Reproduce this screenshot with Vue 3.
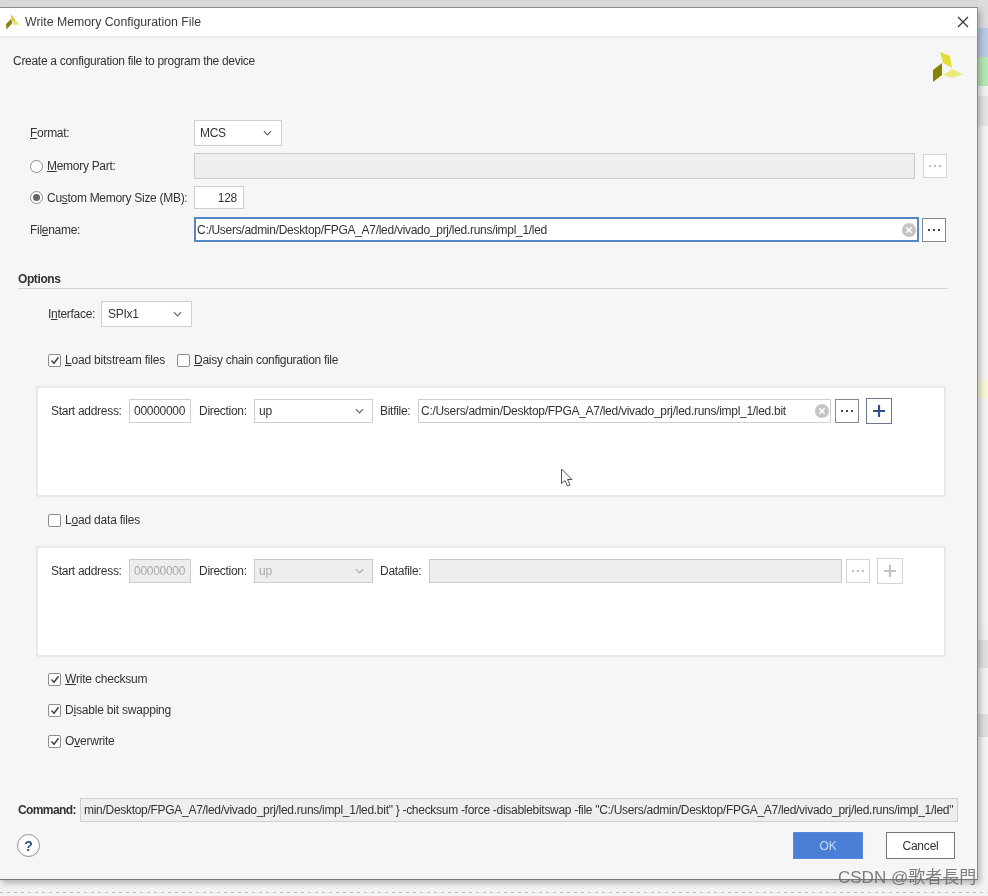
<template>
  <div class="page">
    <div class="backdrop">
      <div v-for="b in backdropBands" :key="b.top" class="band" :style="{ top: b.top + 'px', height: b.height + 'px', background: b.color }"></div>
      <div class="dashes"></div>
    </div>

    <div class="dialog">
      <div class="titlebar">
        <svg class="title-logo" width="15" height="16" viewBox="0 0 15 16">
          <path d="M5.500 0L9 4l2 4-4-1z" fill="#d4c52c" />
          <path d="M8 8l3-1 3.500 3.500L9 11z" fill="#e8e070" />
          <path d="M6 5l1.500 4-6 6.500L1 10z" fill="#8a8512" />
        </svg>
        <span class="title-text">Write Memory Configuration File</span>
        <svg class="close" width="12" height="12" viewBox="0 0 12 12">
          <path d="M1 1l10 10M11 1L1 11" stroke="#333" stroke-width="1.200" fill="none" />
        </svg>
      </div>

      <div class="intro">
        <span>Create a configuration file to program the device</span>
        <svg class="logo" width="32" height="34" viewBox="0 0 32 34">
          <path d="M8 2l10 4 2 12-9-5z" fill="#e2dd35" />
          <path d="M11 25l9-6 11 5-10 4z" fill="#ece97e" />
          <path d="M10 13v12l-9 7V20z" fill="#878200" />
        </svg>
      </div>

      <div class="form">
        <div class="row row-format">
          <label class="field-label"><u>F</u>ormat:</label>
          <div class="combo combo-format">
            <span>MCS</span>
            <svg class="chev" width="9" height="6" viewBox="0 0 10 6"><path d="M1 1l4 4 4-4" /></svg>
          </div>
        </div>

        <div class="row row-part">
          <label class="field-label radio-label"><i class="radio"></i><span><u>M</u>emory Part:</span></label>
          <div class="input disabled part-input"></div>
          <button class="dots dots-off part-btn"><i></i><i></i><i></i></button>
        </div>

        <div class="row row-size">
          <label class="field-label radio-label"><i class="radio on"></i><span>Cu<u>s</u>tom Memory Size (MB):</span></label>
          <div class="input size-input">128</div>
        </div>

        <div class="row row-file">
          <label class="field-label">Fil<u>e</u>name:</label>
          <div class="input focus file-input">
            <span class="grow">C:/Users/admin/Desktop/FPGA_A7/led/vivado_prj/led.runs/impl_1/led</span>
            <svg class="clear" width="14" height="14" viewBox="0 0 14 14">
              <circle cx="7" cy="7" r="7" fill="#c4c4c4" />
              <path d="M4.300 4.300l5.400 5.400M9.700 4.300l-5.400 5.400" stroke="#fff" stroke-width="1.600" />
            </svg>
          </div>
          <button class="dots file-btn"><i></i><i></i><i></i></button>
        </div>
      </div>

      <div class="options-head">Options</div>

      <div class="row row-interface">
        <label class="iface-label">I<u>n</u>terface:</label>
        <div class="combo combo-iface">
          <span>SPIx1</span>
          <svg class="chev" width="9" height="6" viewBox="0 0 10 6"><path d="M1 1l4 4 4-4" /></svg>
        </div>
      </div>

      <div class="check-row first-check">
        <i class="check on"><svg width="10" height="9" viewBox="0 0 10 9"><path d="M1.500 4.500l2.500 2.800 4.500-6" /></svg></i>
        <span><u>L</u>oad bitstream files</span>
        <i class="check daisy"></i>
        <span class="daisy-text"><u>D</u>aisy chain configuration file</span>
      </div>

      <div class="panel bit-panel">
        <div class="panel-row">
          <label class="lbl-start">Start address:</label>
          <div class="input addr">00000000</div>
          <label class="lbl-dir">Direction:</label>
          <div class="combo combo-dir">
            <span>up</span>
            <svg class="chev" width="9" height="6" viewBox="0 0 10 6"><path d="M1 1l4 4 4-4" /></svg>
          </div>
          <label class="lbl-bit">Bitfile:</label>
          <div class="input bit-input">
            <span class="grow">C:/Users/admin/Desktop/FPGA_A7/led/vivado_prj/led.runs/impl_1/led.bit</span>
            <svg class="clear" width="14" height="14" viewBox="0 0 14 14">
              <circle cx="7" cy="7" r="7" fill="#c4c4c4" />
              <path d="M4.300 4.300l5.400 5.400M9.700 4.300l-5.400 5.400" stroke="#fff" stroke-width="1.600" />
            </svg>
          </div>
          <button class="dots bit-btn"><i></i><i></i><i></i></button>
          <button class="plus">
            <svg width="14" height="14" viewBox="0 0 14 14"><path d="M7 1v12M1 7h12" stroke="#2f5288" stroke-width="2.200" /></svg>
          </button>
        </div>
      </div>

      <div class="check-row data-check">
        <i class="check"></i>
        <span>L<u>o</u>ad data files</span>
      </div>

      <div class="panel data-panel">
        <div class="panel-row">
          <label class="lbl-start">Start address:</label>
          <div class="input addr disabled muted">00000000</div>
          <label class="lbl-dir">Direction:</label>
          <div class="combo combo-dir disabled muted">
            <span>up</span>
            <svg class="chev" width="9" height="6" viewBox="0 0 10 6"><path d="M1 1l4 4 4-4" /></svg>
          </div>
          <label class="lbl-bit">Datafile:</label>
          <div class="input disabled data-input"></div>
          <button class="dots dots-off data-btn"><i></i><i></i><i></i></button>
          <button class="plus plus-off">
            <svg width="14" height="14" viewBox="0 0 14 14"><path d="M7 1v12M1 7h12" stroke="#c4c4c4" stroke-width="2.200" /></svg>
          </button>
        </div>
      </div>

      <div class="checks">
        <div v-for="c in bottomChecks" :key="c.rest" class="check-row">
          <i class="check on"><svg width="10" height="9" viewBox="0 0 10 9"><path d="M1.500 4.500l2.500 2.800 4.500-6" /></svg></i>
          <span>{{ c.before }}<u>{{ c.key }}</u>{{ c.rest }}</span>
        </div>
      </div>

      <div class="command">
        <label>Command:</label>
        <div class="command-box">min/Desktop/FPGA_A7/led/vivado_prj/led.runs/impl_1/led.bit" } -checksum -force -disablebitswap -file "C:/Users/admin/Desktop/FPGA_A7/led/vivado_prj/led.runs/impl_1/led"</div>
      </div>

      <div class="footer">
        <button class="help">?</button>
        <button class="btn ok">OK</button>
        <button class="btn cancel">Cancel</button>
      </div>
    </div>

    <svg class="cursor" width="14" height="20" viewBox="0 0 14 20">
      <path d="M1.500 1v14.500l3.500-3 2.500 5.500 2.500-1-2.500-5.500h4.500z" fill="#fff" stroke="#555" stroke-width="1" />
    </svg>
    <div class="watermark">CSDN @歌者長門</div>
  </div>
</template>

<script setup>
const backdropBands = [
  { top: 0, height: 28, color: '#dcdcdc' },
  { top: 28, height: 29, color: '#bccae6' },
  { top: 57, height: 29, color: '#b6e6b8' },
  { top: 86, height: 10, color: '#f2f2f2' },
  { top: 96, height: 30, color: '#e4e4e4' },
  { top: 126, height: 70, color: '#f4f4f4' },
  { top: 196, height: 184, color: '#f3f3f3' },
  { top: 380, height: 18, color: '#f8f5d8' },
  { top: 398, height: 227, color: '#f4f4f4' },
  { top: 625, height: 15, color: '#f0f0f0' },
  { top: 640, height: 28, color: '#e0e0e0' },
  { top: 668, height: 46, color: '#f2f2f2' },
  { top: 714, height: 23, color: '#dfdfdf' },
  { top: 737, height: 159, color: '#f3f3f3' }
]

const bottomChecks = [
  { before: '', key: 'W', rest: 'rite checksum' },
  { before: 'D', key: 'i', rest: 'sable bit swapping' },
  { before: 'O', key: 'v', rest: 'erwrite' }
]
</script>

<style>
html,
body {
  margin: 0;
  background: #f2f2f2;
}
</style>

<style scoped>
.page {
  position: relative;
  width: 988px;
  height: 896px;
  overflow: hidden;
  font-family: "Liberation Sans", Arial, sans-serif;
  font-size: 12px;
  letter-spacing: -0.29px;
  color: #333;
  padding-top: 7px;
  box-sizing: border-box;
  filter: blur(0.3px);
}

.backdrop {
  position: absolute;
  inset: 0;
  background: linear-gradient(180deg, #d6d6d6 0, #dddddd 8px, #f2f2f2 8px);
}

.band {
  position: absolute;
  left: 978px;
  width: 10px;
}

.dashes {
  position: absolute;
  left: 0;
  right: 0;
  top: 892px;
  height: 1px;
  background: repeating-linear-gradient(90deg, #bdbdbd 0 3px, transparent 3px 7px);
}

.dialog {
  position: relative;
  width: 978px;
  height: 873px;
  box-sizing: border-box;
  background: #f6f6f7;
  border-top: 1px solid #8c8c8c;
  border-right: 1px solid #8c8c8c;
  border-bottom: 1px solid #777;
  box-shadow: 2px 3px 6px rgba(0, 0, 0, 0.28);
}

.titlebar {
  display: flex;
  align-items: center;
  height: 28px;
  background: #fff;
  border-bottom: 2px solid #ececec;
  padding: 0 8px 0 5px;
}

.title-logo {
  margin-right: 5px;
}

.title-text {
  flex: 1;
  font-size: 12.300px;
  letter-spacing: 0;
  color: #3a3a3a;
}

.intro {
  display: flex;
  justify-content: space-between;
  padding: 15px 13px 0 13px;
  height: 67px;
  line-height: 16px;
}

.logo {
  margin-top: -3px;
}

.row {
  display: flex;
  align-items: center;
}

.form {
  padding-left: 30px;
}

.row-format {
  height: 26px;
}

.row-part {
  height: 26px;
  margin-top: 7px;
}

.row-size {
  height: 23px;
  margin-top: 7px;
}

.row-file {
  height: 25px;
  margin-top: 8px;
}

.field-label {
  width: 164px;
  flex: none;
  white-space: nowrap;
}

.radio-label {
  display: flex;
  align-items: center;
  gap: 4px;
}

.radio {
  width: 13px;
  height: 13px;
  flex: none;
  box-sizing: border-box;
  border: 1px solid #8d8d8d;
  border-radius: 50%;
  background: #fff;
  position: relative;
}

.radio.on::after {
  content: "";
  position: absolute;
  inset: 2px;
  border-radius: 50%;
  background: #666;
}

.input,
.combo {
  display: flex;
  align-items: center;
  height: 100%;
  box-sizing: border-box;
  background: #fff;
  border: 1px solid #cfcfcf;
  white-space: nowrap;
}

.disabled {
  background: #eeeeee;
  border-color: #cbcbcb;
}

.muted {
  color: #a8a8a8;
}

.combo {
  justify-content: space-between;
}

.chev {
  fill: none;
  stroke: #666;
  stroke-width: 1.300;
}

.muted .chev {
  stroke: #aaa;
}

.combo-format {
  width: 88px;
  padding: 0 9px 0 5px;
}

.part-input {
  width: 721px;
}

.part-btn {
  margin-left: 8px;
}

.size-input {
  width: 50px;
  justify-content: flex-end;
  padding-right: 6px;
}

.file-input {
  width: 725px;
  padding: 0 1px;
  border: 2px solid #5586c8;
}

.file-btn {
  margin-left: 3px;
}

.grow {
  flex: 1;
}

.clear {
  flex: none;
}

.dots {
  display: flex;
  align-items: center;
  justify-content: center;
  gap: 3px;
  width: 24px;
  height: 24px;
  padding: 0;
  box-sizing: border-box;
  background: #fff;
  border: 1px solid #888;
}

.dots i {
  width: 2px;
  height: 2px;
  background: #444;
}

.dots-off {
  border-color: #d4d4d4;
}

.dots-off i {
  background: #bcbcbc;
}

.options-head {
  margin: 29px 0 0 18px;
  width: 930px;
  height: 17px;
  line-height: 16px;
  font-weight: bold;
  letter-spacing: -0.4px;
  border-bottom: 1px solid #d2d2d2;
}

.row-interface {
  height: 26px;
  margin-top: 12px;
  padding-left: 48px;
}

.iface-label {
  width: 53px;
}

.combo-iface {
  width: 91px;
  padding: 0 9px 0 6px;
}

.check-row {
  display: flex;
  align-items: center;
  height: 16px;
  padding-left: 48px;
  letter-spacing: -0.2px;
}

.check-row span {
  margin-left: 4px;
}

.check-row .daisy-text {
  letter-spacing: -0.29px;
}

.first-check {
  margin-top: 25px;
}

.data-check {
  margin-top: 15px;
}

.check {
  display: flex;
  align-items: center;
  justify-content: center;
  width: 13px;
  height: 13px;
  box-sizing: border-box;
  background: #fff;
  border: 1px solid #8d8d8d;
  border-radius: 2px;
}

.check svg {
  fill: none;
  stroke: #444;
  stroke-width: 1.500;
}

.daisy {
  margin-left: 12px;
}

.panel {
  margin: 18px 0 0 36px;
  width: 910px;
  height: 111px;
  box-sizing: border-box;
  background: #fff;
  border: 2px solid #e9e9e9;
  padding: 11px 0 0 13px;
}

.panel-row {
  display: flex;
  align-items: center;
  height: 24px;
}

.lbl-start {
  width: 78px;
}

.addr {
  width: 62px;
  padding-left: 4px;
}

.lbl-dir {
  width: 55px;
  margin-left: 8px;
}

.combo-dir {
  width: 119px;
  padding: 0 8px 0 4px;
}

.lbl-bit {
  margin-left: 7px;
  width: 38px;
}

.bit-input {
  width: 413px;
  padding: 0 1px 0 2px;
}

.bit-btn {
  margin-left: 4px;
}

.plus {
  display: flex;
  align-items: center;
  justify-content: center;
  margin-left: 7px;
  width: 26px;
  height: 26px;
  flex: none;
  padding: 0;
  box-sizing: border-box;
  background: #fff;
  border: 1px solid #6b7a90;
}

.plus-off {
  border-color: #d4d4d4;
}

.data-panel .lbl-bit {
  width: 42px;
}

.data-input {
  width: 413px;
  margin-left: 7px;
}

.data-btn {
  margin-left: 4px;
}

.checks {
  display: flex;
  flex-direction: column;
  gap: 15px;
  margin-top: 14px;
}

.command {
  display: flex;
  align-items: center;
  margin-top: 49px;
  padding-left: 18px;
  height: 24px;
}

.command label {
  width: 62px;
  font-weight: bold;
  letter-spacing: -0.6px;
}

.command-box {
  width: 878px;
  height: 100%;
  box-sizing: border-box;
  border: 1px solid #cfcfcf;
  background: #eeeeee;
  line-height: 22px;
  padding-left: 3px;
  overflow: hidden;
  white-space: nowrap;
}

.footer {
  display: flex;
  align-items: center;
  margin-top: 10px;
  padding: 0 22px 0 17px;
  height: 27px;
}

.help {
  width: 23px;
  height: 23px;
  padding: 0;
  border: 1px solid #909090;
  border-radius: 50%;
  background: #fff;
  color: #2f5288;
  font: bold 14px "Liberation Sans", Arial, sans-serif;
  margin-right: auto;
}

.btn {
  height: 27px;
  padding: 0;
  box-sizing: border-box;
  font: 12px "Liberation Sans", Arial, sans-serif;
  letter-spacing: -0.2px;
}

.ok {
  width: 70px;
  background: #4a7fd6;
  border: 1px solid #5a8bdb;
  color: #c9d9f2;
}

.cancel {
  width: 69px;
  margin-left: 23px;
  background: #fff;
  border: 1px solid #777;
  color: #333;
}

.cursor {
  position: absolute;
  left: 560px;
  top: 468px;
}

.watermark {
  position: absolute;
  left: 838px;
  top: 868px;
  font-family: "Liberation Sans", "Noto Sans CJK TC", sans-serif;
  font-size: 17px;
  line-height: 20px;
  letter-spacing: 0;
  color: rgba(105, 105, 105, 0.85);
  white-space: nowrap;
}
</style>
